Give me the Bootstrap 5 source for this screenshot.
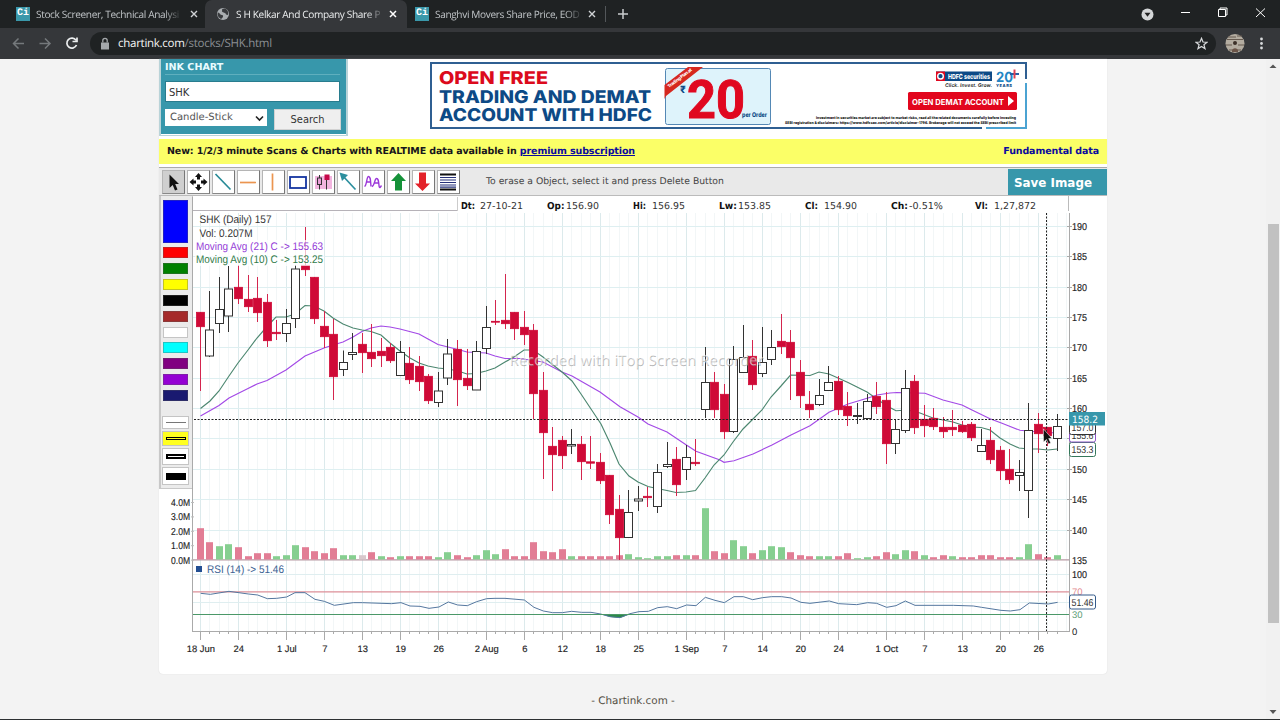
<!DOCTYPE html>
<html lang="en">
<head>
<meta charset="utf-8">
<title>S H Kelkar And Company Share Price</title>
<link href="https://cdn.jsdelivr.net/npm/bootstrap@5.3.0/dist/css/bootstrap.min.css" rel="stylesheet">
<style>
body{background:#f3f3f3;height:720px;overflow:hidden;font-family:"DejaVu Sans",sans-serif;font-size:11px;line-height:1;color:#222;text-rendering:geometricPrecision}
svg{display:block;flex:none}
.chrome{background:#35373a;font-family:"Open Sans",sans-serif;height:59px}
.tabs{height:28px;background:#1f2223;font-size:10.1px;letter-spacing:-.36px;color:#bfc3c6}
.tabbox{height:28px;white-space:nowrap}
.tabbox.on{background:#35373a;border-radius:7px 7px 0 0;color:#eceeef}
.tt{overflow:hidden;-webkit-mask-image:linear-gradient(90deg,#000 88%,transparent);mask-image:linear-gradient(90deg,#000 88%,transparent);line-height:18px}
.fav{width:14px;height:14px;background:#3a98aa;color:#fff;font:bold 10px/14px "Liberation Mono",monospace;text-align:center;letter-spacing:0}
.omni{height:23px;background:#1f2223;border-radius:12px;width:1126px;font-size:11.5px;letter-spacing:-.27px;color:#8b8f93}
.omni b{font-weight:400;color:#f4f4f4}
.page{width:948px;background:#fff;margin-left:159px;height:615px;border-radius:0 0 4px 4px;box-shadow:0 0 1px #ccc}
.formcard{width:189px;height:77px;border:solid #b9d3d8;border-width:0 2px 1px}
.form-in{background:#3797ab;height:75px;padding:3px 6px 0 4px}
.ftitle{font:bold 9.6px/11px "DejaVu Sans",sans-serif;color:#e9fbff;height:13px;border-bottom:1px solid #5fafbe}
.form-in .form-control{height:21px;margin-top:6px;border:1px solid #287c8e;border-radius:0;padding:1px 3px 0;font-size:10px;background:#fff;color:#333}
.pick{width:102px;height:17px;background:#fff;padding:1px 3px 0 5px;font-size:10px;color:#555}
.go{width:67px;height:21px;background:#efefef;border:1px solid #d2d2d2;border-radius:0;padding:0;font-size:9.9px;line-height:20px;color:#333}
.notice{height:25px;background:#fbff67;font-weight:700;font-size:9.5px;letter-spacing:-.11px;color:#16161c;padding:0 8px;line-height:25px}
.notice a{color:#0b0b9e}
.tools{height:29px;background:#e9e9e9;border-top:1px solid #aaa;border-bottom:1px solid #bbb;padding-left:3px;margin-top:3px}
.tool{width:23px;height:24px;background:#fff;border:1px solid #b5b5b5;border-right-color:#777;border-bottom-color:#888;margin-right:2px;border-radius:0;padding:0}
.tool.on{background:#cfcfcf}
.save{background:#3797ab;color:#fff;width:99px;height:26px;font:bold 11.9px/26px "DejaVu Sans",sans-serif;border-radius:0;text-align:left}
.side{width:34px;height:293px;background:#ebebeb;border:1px solid #c8c8c8;border-width:0 1px 1px 2px;padding:4px 3px 0 2px}
.sw{width:25px;height:11px;margin-bottom:4.85px;border:1px solid rgba(90,90,90,.35)}
.wt{width:27px;background:#fff;border:1px solid #c4c4c4;margin-left:-1px}
.wt i{display:block;width:20px}
.foot{margin-top:22px;width:1266px;text-align:center;font-size:10.4px;color:#555045}
.sbar{width:14px;top:59px;right:0;bottom:0;background:#f1f1f1}
.thumb{position:absolute;left:2px;width:11px;top:165px;height:399px;background:#c1c1c1}
.endline{left:0;right:0;bottom:0;height:1px;background:#2c2f31}
</style>
</head>
<body class="position-relative">
<header class="chrome">
  <div class="tabs d-flex align-items-end">
    <div class="tabbox d-flex align-items-center" style="width:205px;padding-left:16px">
      <span class="fav">Ci</span><span class="tt" style="width:146px;margin-left:6px">Stock Screener, Technical Analysi</span>
      <svg class="ms-2" width="8" height="8" stroke="#d0d3d5" stroke-width="1.4"><path d="M1 1 7 7M7 1 1 7"/></svg>
    </div>
    <div class="tabbox on d-flex align-items-center" style="width:202px;padding-left:11px">
      <svg width="14" height="14" viewBox="0 0 14 14"><circle cx="7" cy="7" r="6" fill="#aaaeb1"/><path d="M2 5.500C4 6 4 8 6 8S7 11 5 12C3 11 1.500 9 1.500 7ZM6 2C7 3 5 4 6.500 5S10 6 10 7.500L12 8C13 5 11 2 8.500 1.500Z" fill="#393b3e"/></svg>
      <span class="tt" style="width:148px;margin-left:6px">S H Kelkar And Company Share P</span>
      <svg style="margin-left:5px" width="8" height="8" stroke="#fff" stroke-width="1.5"><path d="M1 1 7 7M7 1 1 7"/></svg>
    </div>
    <div class="tabbox d-flex align-items-center" style="width:198px;padding-left:8px">
      <span class="fav">Ci</span><span class="tt" style="width:148px;margin-left:6px">Sanghvi Movers Share Price, EOD</span>
      <svg style="margin-left:5px" width="8" height="8" stroke="#d0d3d5" stroke-width="1.4"><path d="M1 1 7 7M7 1 1 7"/></svg>
    </div>
    <svg width="675" height="28" fill="none" stroke="#fff"><path d="M-.5 6V22" stroke="#53575a" transform="translate(1 0)"/><path d="M13 14H23M18 9V19" stroke="#c9ccce" stroke-width="1.5"/><circle cx="542.500" cy="14.500" r="6" fill="#d4d6d8" stroke="none"/><path d="M539.500 12.800H545.500L542.500 16.800Z" fill="#222" stroke="none"/><path d="M576 12.500H585M613.500 9.500H620.500V16.500H613.500ZM615 9V8H622V15H621M651 8.500 660 17M660 8.500 651 17"/></svg>
  </div>
  <div class="d-flex align-items-center" style="height:31px">
    <svg width="90" height="31" fill="none" stroke-width="1.500"><path d="M24 15.500H13.500M18.500 10.500 13.500 15.500 18.500 20.500M39.500 15.500H50M45 10.500 50 15.500 45 20.500" stroke="#75797c"/><path d="M76 12.200A5 5 0 1 0 76.500 17M77 9.500V13.500H72.500" stroke="#eceeef" stroke-width="1.700"/></svg>
    <div class="omni d-flex align-items-center">
      <svg width="28" height="23"><path d="M11 10.500H19V17.500H11Z" fill="#a4a8ab"/><path d="M12.800 10.500V8.500A2.200 2.200 0 0 1 17.200 8.500V10.500" fill="none" stroke="#a4a8ab" stroke-width="1.300"/></svg>
      <span><b>chartink.com</b>/stocks/SHK.html</span>
      <svg class="ms-auto" style="margin-right:8px" width="13" height="13" viewBox="0 0 13 13" fill="none" stroke="#d8dadc" stroke-width="1.200"><path d="M6.500 1.300 8 5 12 5.200 8.900 7.700 10 11.600 6.500 9.400 3 11.600 4.100 7.700 1 5.200 5 5Z"/></svg>
    </div>
    <svg width="62" height="31"><circle cx="19" cy="15.500" r="9.500" fill="#b3aca0"/><path d="M11 11.500H27M12 9H20M21 8H26M10 17H16M22 17H28M13 22H25" stroke="#65594f"/><circle cx="19" cy="15" r="2" fill="#3b3028"/><path d="M16 24C15 19 23 19 22 24Z" fill="#6b5448"/><g fill="#d8dadc"><circle cx="45.500" cy="11" r="1.400"/><circle cx="45.500" cy="15.500" r="1.400"/><circle cx="45.500" cy="20" r="1.400"/></g></svg>
  </div>
</header>

<main class="page">
  <div class="d-flex" style="height:80px">
    <div class="formcard"><div class="form-in">
      <div class="ftitle">INK CHART</div>
      <input class="form-control" value="SHK">
      <div class="d-flex justify-content-between" style="margin-top:7px">
        <div class="pick d-flex align-items-center justify-content-between"><span>Candle-Stick</span><svg width="9" height="7" fill="none" stroke="#222" stroke-width="1.600"><path d="M1 1.500 4.500 5 8 1.500"/></svg></div>
        <button class="btn go" style="margin-right:-1px">Search</button>
      </div>
    </div></div>
    <svg style="margin:3px 0 0 81px" width="599" height="68" viewBox="-1 0 599 68" font-family="Inter,sans-serif" font-weight="800">
      <path d="M596 17V1H1V66H552" fill="none" stroke="#2f5f92" stroke-width="2"/><path d="M596 21V66H556" fill="none" stroke="#4ba3d2" stroke-width="2"/>
      <g font-size="17.500"><text x="9" y="22" fill="#dc0a1c" textLength="109" lengthAdjust="spacingAndGlyphs">OPEN FREE</text>
      <g fill="#0d4a86"><text x="9" y="40.500" textLength="212" lengthAdjust="spacingAndGlyphs">TRADING AND DEMAT</text><text x="9" y="59" textLength="213" lengthAdjust="spacingAndGlyphs">ACCOUNT WITH HDFC</text></g></g>
      <rect x="235.500" y="6.500" width="105" height="56" rx="2" fill="#def3fb" stroke="#5488b5"/>
      <path d="M234.500 23 258 5H273L236 34 234.500 37Z" fill="#d6281f"/><text transform="translate(239 26) rotate(-37)" font-size="4.500" fill="#fff" textLength="29">Trading Plan at</text>
      <text x="250" y="31" font-size="10" fill="#0d4a86">₹</text>
      <text x="257" y="56" font-family="Roboto,sans-serif" font-size="53" font-weight="700" fill="#e00820" stroke="#e00820" textLength="58" lengthAdjust="spacingAndGlyphs">20</text>
      <text x="312" y="55" font-size="6.500" fill="#0d4a86" textLength="25" lengthAdjust="spacingAndGlyphs">per Order</text>
      <rect x="506" y="9.500" width="56" height="9.500" fill="#0d4a86"/><rect x="506" y="9.500" width="9" height="9.500" fill="#e00820"/><circle cx="510.500" cy="14.200" r="2.800" fill="#0d4a86" stroke="#fff" stroke-width="1.400"/>
      <text x="518" y="17" font-size="7" fill="#fff" textLength="42" lengthAdjust="spacingAndGlyphs">HDFC securities</text>
      <text x="515" y="25" font-size="5" font-style="italic" font-weight="600" fill="#222" textLength="47">Click. Invest. Grow.</text>
      <text x="566" y="20" font-size="14" font-weight="700" fill="#2385c4" textLength="17" lengthAdjust="spacingAndGlyphs">20</text><path d="M580 12H589" stroke="#245fa5" stroke-width="2"/><path d="M584.500 7.500V16.500" stroke="#e04050" stroke-width="2"/>
      <text x="566" y="25" font-size="4" fill="#0d4a86" textLength="16">YEARS</text>
      <rect x="478" y="30" width="109" height="18" rx="1.500" fill="#e2061d"/><text x="482" y="42.500" font-size="8.200" fill="#fff" font-weight="700" textLength="92" lengthAdjust="spacingAndGlyphs">OPEN DEMAT ACCOUNT</text><path d="M578 34 584 39 578 44Z" fill="#fff"/>
      <g font-size="3.800" fill="#111"><text x="386" y="57" textLength="200" lengthAdjust="spacingAndGlyphs">Investment in securities market are subject to market risks, read all the related documents carefully before investing</text><text x="355" y="61.500" textLength="231" lengthAdjust="spacingAndGlyphs">SEBI registration &amp; disclaimers: https://www.hdfcsec.com/article/disclaimer-1796. Brokerage will not exceed the SEBI prescribed limit</text></g>
    </svg>
  </div>
  <div class="notice d-flex justify-content-between"><span>New: 1/2/3 minute Scans &amp; Charts with REALTIME data available in <a href="#">premium subscription</a></span><a href="#" class="text-decoration-none">Fundamental data</a></div>

  <div class="tools d-flex align-items-center">
    <button class="btn tool on"><svg width="21" height="22"><path d="M6.500 3.500V17L9.700 14 12 19.500 14.500 18.500 12.200 13H16Z" fill="#111"/></svg></button>
    <button class="btn tool"><svg width="21" height="22" fill="#111"><path d="M10.500 2 14 6H12V8.500H9V6H7ZM10.500 20 14 16H12V13.500H9V16H7ZM1.500 11 5.500 7.500V9.500H8V12.500H5.500V14.500ZM19.500 11 15.500 7.500V9.500H13V12.500H15.500V14.500Z"/></svg></button>
    <button class="btn tool"><svg width="21" height="22"><path d="M2.500 3 17.500 18.500" stroke="#278a96" stroke-width="1.700"/></svg></button>
    <button class="btn tool"><svg width="21" height="22"><path d="M2 11.500H18" stroke="#eb9550" stroke-width="1.700"/></svg></button>
    <button class="btn tool"><svg width="21" height="22"><path d="M9.500 2.500V19.500" stroke="#eb9550" stroke-width="1.700"/></svg></button>
    <button class="btn tool"><svg width="21" height="22"><rect x="2" y="6" width="16" height="11" fill="#fff" stroke="#1535a0" stroke-width="1.800"/></svg></button>
    <button class="btn tool"><svg width="21" height="22"><path d="M2 5H19V18H2Z" fill="#f2b5df"/><path d="M6.500 4V18.500M13.500 7V18.500" stroke="#333"/><rect x="4.500" y="7" width="4" height="6.500" fill="#e8a0d8" stroke="#333"/><rect x="11.500" y="3.500" width="5" height="5.500" fill="#c5084a"/></svg></button>
    <button class="btn tool"><svg width="21" height="22"><path d="M4 4 17.500 18.500" stroke="#2c8f9e" stroke-width="1.700"/><path d="M1.500 1.500 10 4 4 10Z" fill="#2c8f9e"/></svg></button>
    <button class="btn tool"><svg width="21" height="22" fill="none" stroke="#9b36d9" stroke-width="1.400"><path d="M1.500 15.500C4 14 3.500 5.500 5.500 5.500S7.500 9 8 15.500M3 11H8M9 15.500C12 14 11.500 7.500 13.500 7.500S15.500 10 16 14.500 18 15 18.500 14.500M11 12H16"/></svg></button>
    <button class="btn tool"><svg width="21" height="22"><path d="M10.500 2 18 10H14V19.500H7V10H3Z" fill="#159239"/></svg></button>
    <button class="btn tool"><svg width="21" height="22"><path d="M9.500 20 17 12.500H13V1.500H6V12.500H2Z" fill="#e3222a"/></svg></button>
    <button class="btn tool"><svg width="21" height="22" stroke="#253078" stroke-width="1.200"><path d="M2 3.500H18M2 18.500H18" stroke="#111" stroke-width="1.800"/><path d="M2 6.500H18M2 9H18M2 11.500H18M2 14H18M2 16.200H18"/></svg></button>
    <span style="margin-left:24px;font-size:9.25px;color:#444">To erase a Object, select it and press Delete Button</span>
    <button class="btn save ms-auto p-0" style="text-indent:5px">Save Image</button>
  </div>

  <div class="d-flex">
    <aside class="side" id="side"></aside>
    <svg id="chart" class="position-relative" style="margin-left:-34px" width="948" height="477" viewBox="159 196 948 477" font-family="Liberation Sans,Arial,sans-serif" font-size="11"></svg>
  </div>
</main>
<footer class="foot">- Chartink.com -</footer>
<div class="sbar position-absolute"><svg width="14" height="14"><path d="M3.500 9 7 5.500 10.500 9Z" fill="#555"/></svg><div class="thumb"></div><svg class="position-absolute bottom-0" width="14" height="14"><path d="M3.500 4 10.500 4 7 8Z" fill="#555"/></svg></div>
<div class="endline position-absolute"></div>

<script>
// Colour swatches and line-weight buttons of the drawing palette
const sw=['#0000ff','#ff0000','#008000','#ffff00','#000','#a52a2a','#fff','#00ffff','#800080','#9400d3','#191970'];
let sh=sw.map((c,i)=>`<div class="sw" style="background:${c};${i?'':'height:42.5px'}"></div>`).join('');
sh+='<div style="height:10.500px"></div>';
[[13,1,'#777','#fff'],[15,3,'#000','#ffff20'],[17,5,'#000','#fff'],[18,7,'#000','#fff']].forEach(([h,t,c,b],i)=>{
  const st=i==1||i==2?`height:${t}px;border:${i==2?2:1.5}px solid #000;background:${b}`:`height:${t}px;background:${c}`;
  sh+=`<div class="wt d-flex align-items-center justify-content-center" style="height:${h}px;background:${b};margin-bottom:2px"><i style="${st};box-sizing:border-box"></i></div>`;
});
document.getElementById('side').innerHTML=sh;

// Each candle: wick top, body top, body bottom, wick bottom, r(ed) or w(hite)
const C=`312 312 327 391 r;291 330 356 357 w;277 309.500 323.500 333 w;266 289 316 332 w;265 287 299 304 r;275 299 307 312 r;277 298 313 322 r;294 302 341 347 r;320 332 334 340 r;309 323.500 333.500 342 w;265 269 318.500 328 w;227 265 270 276 r;277 277 319 324 r;311 326 337 348 r;319 334 377 400 r;350.500 362.500 369.500 376 w;333 352.500 354.500 360 w;333 344 353 373 r;324 352 359 367 r;338 351 356 367 r;343 347 361 363 r;341 352.500 375.500 376 w;347 363 380 384 r;356 366 382 391 r;374 376 401 404 r;372 391 402.500 407 w;339 354 378 385 w;340 349 380 406 r;349 378 386 390 r;341 351.500 390 390 w;306 327.500 348.500 354 w;300 321 322.500 325 r;274 320 324 329 r;312 312 329 340 r;311 327 335 345 r;324 330 394 419 r;372 390 433 479 r;427 446 455 491 r;436 440 456 469 r;429 444.500 446 454 w;436 444 462 480 r;436 461.500 463.500 469 r;453 462 481 484 r;475 475 515 524 r;495 509 538 560 r;490 512.500 537.500 538 w;486 499 501 511 w;487 496 498 507 r;464 472.500 506.500 513 w;442 464.500 466.500 468 w;447 459 485 496 r;445 457.500 469.500 480 w;439 462 464 466 r;347 382.500 409.500 418 w;372 382 410 418 r;384 394 432 439 r;346 359.500 431.500 433 w;325 357.500 372.500 373 w;340 356 385 390 r;327 362.500 373.500 377 w;330 347.500 359.500 365 w;314 341 347 354 r;330 342 358 400 r;360 372 396 408 r;391 404 410 418 r;379 395.500 404.500 406 w;366 382.500 390.500 391 w;376 381 410 415 r;392 406 416 426 r;403 415.500 416.500 424 w;394 401.500 418.500 419 w;382 396 407 414 r;392 400 444 464 r;419 429.500 443.500 454 w;370 388.500 430.500 433 w;375 381 428 434 r;405 419 426 437 r;408 418 427 430 r;417 427 432 438 r;410 427 430 436 r;421 425 432 433 r;422 424 438 441 r;429 445.500 451.500 452 w;427 440 460 464 r;446 450 471 480 r;449 469 480 484 r;460 472.500 475.500 491 w;403 430.500 490.500 518 w;413 424 434 453 r;427 427 436 446 r;414 426.500 438.500 451 w`.split(';').map(s=>s.split(' '));
const V='r31 r17 g13 g15 r12 r3 r6 r6 g3 g4 g14 r12 r8 r6 r11 g4 g4 n4 r7 g3 r2 g3 r3 r3 r3 g2 g7 r4 r2 g4 g9 g5 r10 r3 r3 r17 r8 r7 r10 g3 r3 r3 r3 r3 r4 g5 g2 g1 g3 g3 r4 g4 r4 g51 r8 r6 g19 g13 r6 g9 g13 g12 r7 r4 r3 g3 g3 r3 r6 g1 g2 r3 r7 g5 g9 r8 g4 r2 r4 g3 r2 r2 r4 r4 r2 r2 g2 g15 r5 r2 g4'.split(' ');
const major={0:'18 Jun',4:'24',9:'1 Jul',13:'7',17:'13',21:'19',25:'26',30:'2 Aug',34:'6',38:'12',42:'18',46:'25',51:'1 Sep',55:'7',59:'14',63:'20',67:'24',72:'1 Oct',76:'7',80:'13',84:'20',88:'26'};
const R=i=>Math.floor(200.4+i*9.523)+.5;
const fit=n=>`textLength="${n}" lengthAdjust="spacingAndGlyphs"`;
let o='<path d="M193 197H1069V632H193Z" fill="#fff"/>';
const line=(x1,y1,x2,y2,c,w=1,e='')=>`<path d="M${x1} ${y1}L${x2} ${y2}" stroke="${c}" stroke-width="${w}" fill="none" ${e}/>`;
const text=(x,y,t,c='#222',e='')=>`<text x="${x}" y="${y}" fill="${c}" ${e}>${t}</text>`;
for(let i=0;i<92;i++){o+=line(R(i),213,R(i),631,major[i]?'#dceaec':'#f2f6f7');if(i<91)o+=line(R(i),632,R(i),major[i]?640:634,'#aaa')}
for(let k=0;k<12;k++){const y=Math.round(226+k*30.35)+.5;
 if(k<11)o+=line(193,y,1069,y,'#deeff1')+line(1067,y,1072,y,'#aaa');
 if(k!=7)o+=text(1072,y+3.5,190-k*5,'#222','font-size="10" stroke="#222" stroke-width=".15" '+fit(15))}
o+=line(193,574.5,1069,574.5,'#dfeef0')+line(193,602.5,1069,602.5,'#dfeef0');
o+=line(193,210.5,458,210.5,'#b6b2b8')+line(457.5,197,457.5,211,'#ccc')+line(1068.5,196,1068.5,211,'#bbb');
o+=line(193,559.8,1069,559.8,'#b79aa3',1.3)+line(192.5,197,192.5,632,'#aaa')+line(1069.5,213,1069.5,632,'#aaa')+line(192,631.5,1070,631.5,'#aaa');
V.forEach((v,i)=>{const h=+v.slice(1)+.3;o+=`<rect x="${R(i)-3.5}" y="${559.5-h}" width="7" height="${h}" fill="${{r:'#e27d95',g:'#86cf90',n:'#d8c8cc'}[v[0]]}"/>`});
const G='200.5,408.5 210,401 219,391 229,376 238,363 248,350 257,338 267,326.5 276,317 286,317 295,314 305,305.5 314,306 324,311 333,318 343,324 353,328 362,330 371,331.5 381,335 390,343 400,351 410,358 419,363 428,366 438,368 448,369 458,371 467,374 476,373.5 486,371 495,368 505,362 514,357 524,350 533,350 543,357 562,372 572,381 581,394 591,409 601,424 610,443 619,464 629,476 638,482 648,486.5 657,488.5 667,490.5 676,492.5 686,492 695.5,490.5 705,478 714,465 724,455 733,442 743,429 752,420 762,410 771,397 781,386 790.5,375 810,375.5 819,372 829,374 838,378 848,382.5 867,392 877,399 887,406 896,410.7 908,410 920,413 933,418 943,420 953,422 962,425 972,427 981,427.5 990,430 1000,438 1010,444 1019,448 1029,449 1038,449 1048,450 1057,449';
const P='200.5,416 219,405.5 229,398 248,388.5 257,384 267,380.5 286,370 305,356 324,348 333,345 343,342 353,337 362,331.5 371,328 381,326 390,327 400,329 419,334 428,339 438,344.5 448,347 458,349.5 467,352 486,353 495,356 505,358.5 520,358.5 543,362 562,372 572,376 600,392 620,406.7 638,417 648,424 667,432 686,444.7 696,451.3 720,460 724,462.3 734,460.7 753,454 772,445 791,435 810,425.7 829,412.3 848,404 868,398 877,395 890,393 897,392.5 925,393.3 943,400 962,405 972,410 990,418.7 1002,423.3 1020,430.3 1038,432 1057,433';
o+=`<g fill="none" stroke-width="1.150"><polyline points="${P}" stroke="#a349e6"/><polyline points="${G}" stroke="#4c8770"/></g>`;
C.forEach((c,i)=>{const x=R(i),[a,b,d,e,k]=c,red=k=='r';
 o+=line(x,a,x,e,red?'#d4254e':'#333',1);
 o+=`<rect x="${x-4}" y="${+b+(red?.3:0)}" width="8" height="${d-b-(red?.6:0)}" fill="${red?'#cf0a37':'#fff'}" stroke="${red?'#cf0a37':'#333'}" stroke-width="${red?.8:1}"/>`});
// RSI pane
const rs='137,310 166,313 222,304 280,312 308,315 337,326 365,325 395,321 420,308 450,308 480,328 508,334 538,346 595,338 622,338 710,341 738,338 765,348 795,349 822,355 852,351 880,336 908,345 937,347 965,335 995,326 1020,325 1050,325 1108,330 1137,352 1165,363 1193,368 1222,368 1250,364 1280,367 1308,367 1337,372 1365,380 1395,383 1425,371 1452,365 1480,364 1508,353 1537,350 1565,356 1595,345 1623,347 1651,322 1680,331 1708,338 1737,320 1765,320 1793,329 1823,323 1850,320 1880,320 1908,324 1938,337 1965,340 2023,333 2051,341 2105,344 2138,338 2165,340 2195,352 2223,347 2251,333 2280,346 2395,346 2455,348 2480,352 2538,361 2566,363 2595,359 2623,339 2680,342 2708,337';
o+=line(193,591.8,1069,591.8,'#dc8f98',1.2);
o+=`<g transform="translate(155 490) scale(.33333)"><path d="M1337 373 1365 381 1395 384 1425 373Z" fill="#2c8a48"/><polyline points="${rs}" fill="none" stroke="#54769f" stroke-width="3"/></g>`+line(193,614.5,1069,614.5,'#4b9868',1.2);
o+=`<rect x="196" y="566" width="6" height="6" fill="#234f93"/>`+text(207,572.5,'RSI (14) -&gt; 51.46','#3c6292',fit(77));
o+=text(199.5,223,'SHK (Daily) 157','#333',fit(72))+text(199.5,236.5,'Vol: 0.207M','#333',fit(53));
o+=`<path d="M195 240H324V266H195Z" fill="#fff" fill-opacity=".7"/>`+text(196,250,'Moving Avg (21) C -&gt; 155.63','#943bd7',fit(127))+text(196,263.3,'Moving Avg (10) C -&gt; 153.25','#317b4a',fit(127));
['4.0M','3.0M','2.0M','1.0M','0.0M'].forEach((t,i)=>{o+=text(171,506+i*14.4,t,'#222','font-size="10" stroke="#222" stroke-width=".15" '+fit(19))+line(191,502.5+i*14.4,194,502.5+i*14.4,'#bbb')});
for(const i in major)o+=text(R(i)+.3,651.7,major[i],'#222','font-size="9.400" stroke="#222" stroke-width=".15" text-anchor="middle"');
o+=text(1072,578,'100','#222','font-size="10" stroke="#222" stroke-width=".15" '+fit(15))+text(1072,595,'70','#e38a90','font-size="9.500"')+text(1072,618,'30','#5a9c72','font-size="9.500"')+text(1072,635,'0','#222','font-size="9.500"');
// Price tags on the right axis
const tag=(y,t,c)=>`<rect x="1069.500" y="${y-7}" width="26" height="14" rx="2" fill="#fff" stroke="${c}"/>`+text(1071.5,y+3.5,t,'#333','font-size="10" '+fit(22));
o+=tag(449.5,'153.3','#34775a')+tag(435,'155.6','#8d54c7')+tag(427.5,'157.0','#333')+tag(602,'51.46','#355b8a');
o+=line(194,419.5,1070,419.5,'#222',1,'stroke-dasharray="2 1.500"')+line(1046.5,213,1046.5,631,'#222',1,'stroke-dasharray="2 1.500"');
o+='<rect x="1069" y="412" width="36" height="13.500" fill="#3797ab"/>'+text(1072,423,'158.2','#fff','font-family="DejaVu Sans" font-size="10" '+fit(26));
[['Dt:','27-10-21',461,480,523,14],['Op:','156.90',547,566,599,17.5],['Hi:','156.95',633,652,685,13],['Lw:','153.85',719,738,771,18],['Cl:','154.90',805,824,857,13],['Ch:','-0.51%',891,909,943,17],['Vl:','1,27,872',975,994,1036,13]].forEach(([a,b,x,y,z,w])=>{o+=text(x,209.2,a,'#111','font-family="DejaVu Sans" font-weight="700" font-size="9.500" '+fit(w))+text(y,209.2,b,'#333','font-family="DejaVu Sans" font-size="9.500" '+fit(z-y))});
o+='<g font-family="Open Sans" font-size="14.500"><text x="510" y="366" fill="#888" fill-opacity=".6" textLength="254">Recorded with iTop Screen Recorder</text><text x="509.300" y="365.200" fill="#fff" fill-opacity=".55" textLength="254">Recorded with iTop Screen Recorder</text></g>';
o+='<path d="M1043.500 429V442L1046.500 439.500 1048.500 444 1050.700 443 1048.700 438.500H1052Z" fill="#111" stroke="#fff" stroke-width=".5"/>';
document.getElementById('chart').innerHTML=o;
</script>
<script src="https://cdn.jsdelivr.net/npm/bootstrap@5.3.0/dist/js/bootstrap.bundle.min.js"></script>
</body>
</html>
